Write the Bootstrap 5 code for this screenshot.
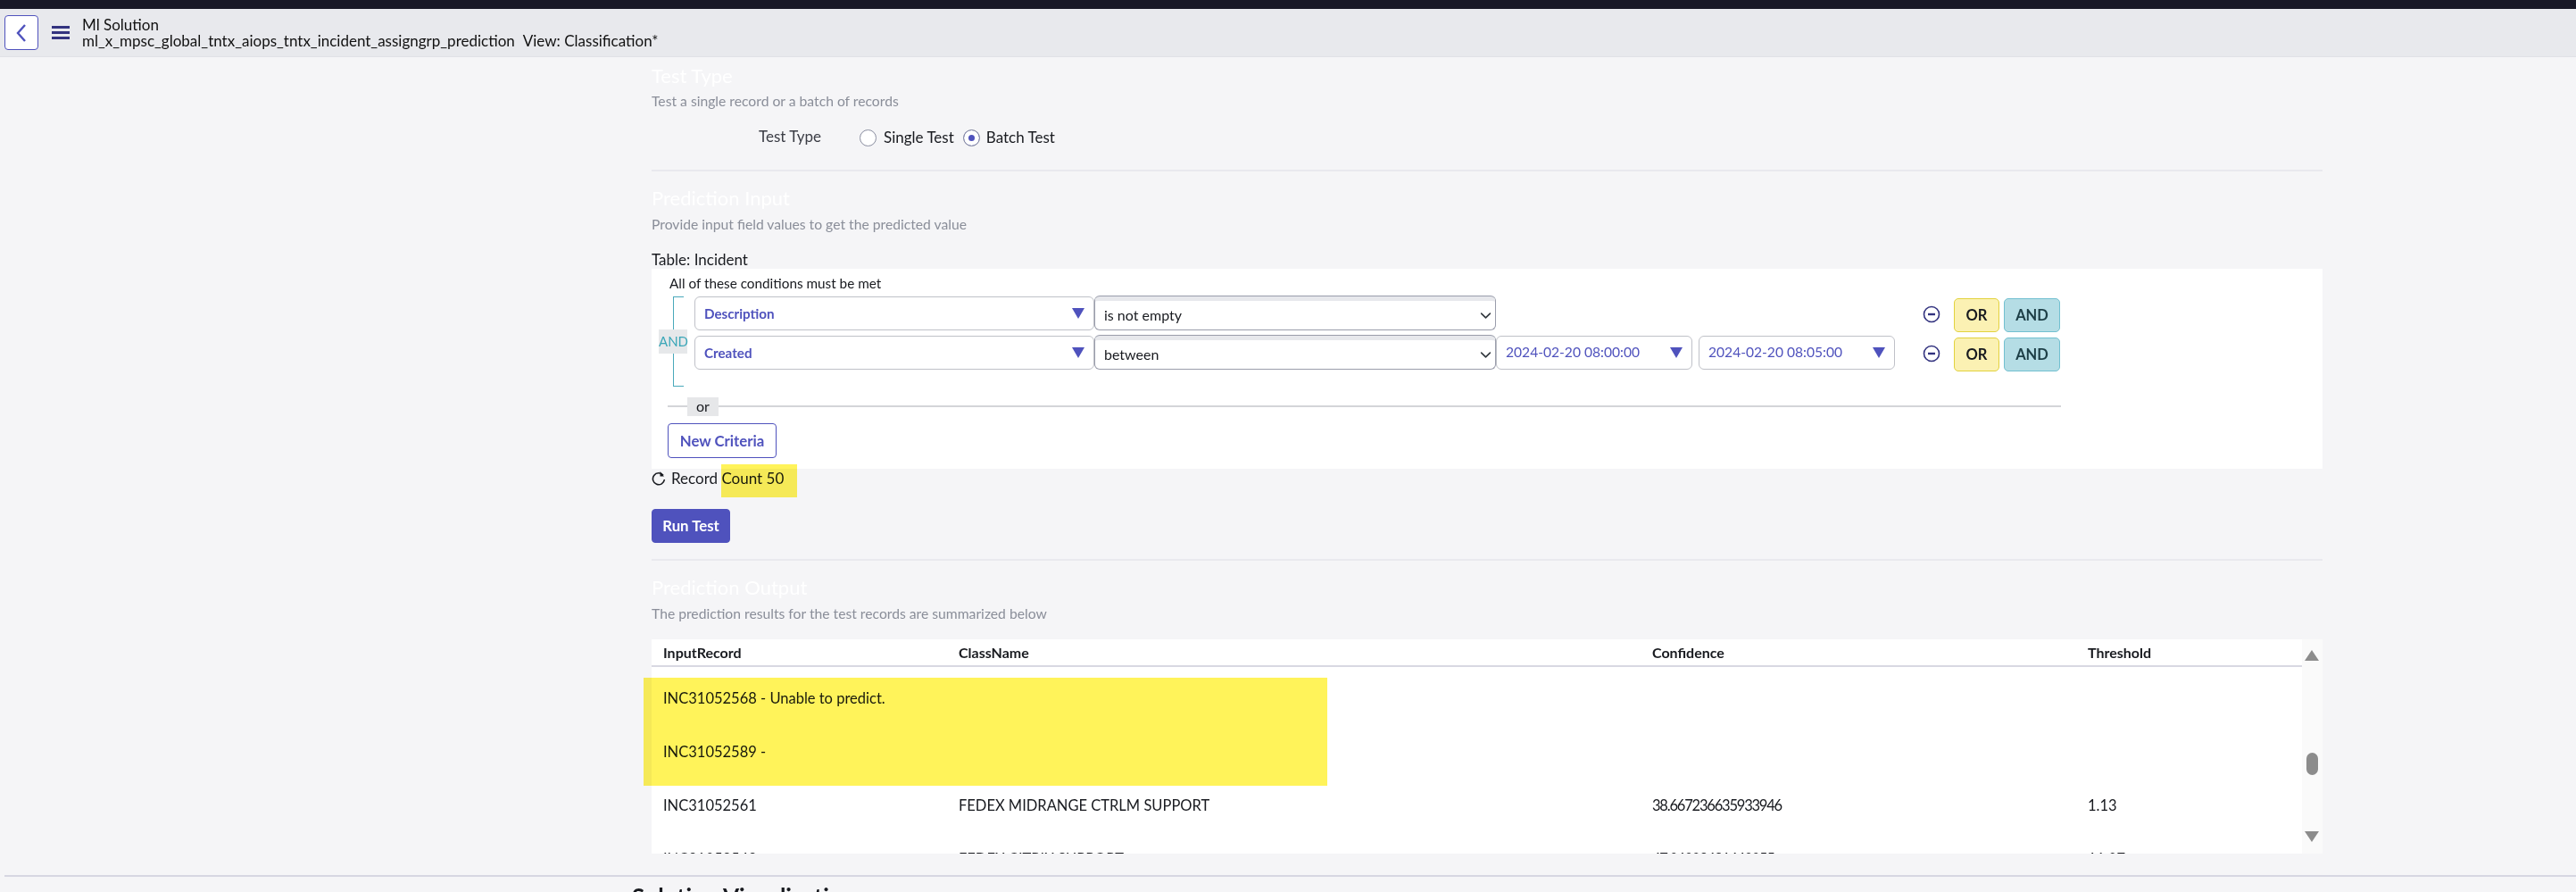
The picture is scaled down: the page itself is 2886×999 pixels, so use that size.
<!DOCTYPE html>
<html>
<head>
  <title>ML Solution</title>
  <link href="https://cdn.jsdelivr.net/npm/bootstrap@5.3.2/dist/css/bootstrap.min.css" rel="stylesheet">
  <script src="https://cdn.jsdelivr.net/npm/bootstrap@5.3.2/dist/js/bootstrap.bundle.min.js"></script>
  <style>
    html, body { height: 999px; overflow: hidden; }
    body { background: #f5f5f7; font-family: Lato, "Liberation Sans", sans-serif; font-size: 17px; color: #181a1f; position: relative; }
    .top-strip { height: 10px; background: #181826; }
    .app-head { height: 54px; background: #e8e9ed; border-bottom: 1px solid #e0e1e6; padding-left: 5px; }
    .back-btn { width: 38px; height: 39px; border: 1px solid #4f52bd; border-radius: 4px; background: #fff; }
    .menu-icon { margin-left: 15px; margin-right: 14px; }
    .head-text { line-height: 18px; font-size: 17px; color: #111; }
    .view-name { margin-left: 9px; }
    .page-col { width: 1872px; margin-left: 730px; }
    .sec-title { color: #fff; font-size: 22px; line-height: 26px; margin: 0; font-weight: 400; }
    .sec-sub { color: #8a8e99; line-height: 20px; font-size: 15.7px; margin: 0; }
    .sec-line { height: 2px; background: #e9e9ee; }
    .type-row { margin-top: 19px; height: 24px; padding-left: 120px; }
    .type-label { width: 113px; padding-bottom: 3px; color: #3b3d45; }
    .fake-radio { width: 19px; height: 19px; border: 1px solid #8a8ea0; border-radius: 50%; background: #fff; margin-right: 8px; }
    .fake-radio.is-on { background: #4f52bd; box-shadow: inset 0 0 0 5px #fff; margin-right: 7px; }
    .radio-text { margin-right: 10px; }
    .cond-panel { background: #fff; height: 224px; padding: 6px 0 0 20px; position: relative; }
    .bracket { position: absolute; left: 24px; top: 31px; width: 12px; height: 101px; border: 1px solid #4aa9bb; border-right: 0; }
    .and-tag { position: absolute; left: 8px; top: 68px; width: 32px; height: 27px; background: #e6e8ea; color: #3ba7b8; text-align: center; line-height: 27px; font-size: 15px; }
    .cond-title { line-height: 20px; font-size: 15.3px; }
    .cond-rows { margin-left: 28px; margin-top: 5px; }
    .cond-row { height: 44px; }
    .pick { height: 38px; border: 1px solid #bfc1c8; border-radius: 6px; background: #fff; color: #4f52bd; font-weight: 700; padding: 0 10px; font-size: 15.2px; }
    .pick-field { width: 448px; }
    .pick-date { width: 220px; font-weight: 400; font-size: 15.6px; }
    .pick-date + .pick-date { margin-left: 7px; }
    .tri { width: 0; height: 0; border-left: 7px solid transparent; border-right: 7px solid transparent; border-top: 12px solid #4f52bd; }
    .op-select.form-select { width: 450px; height: 38px; border: 1px solid #9a9dab; border-top: 5px solid #e7e8ec; box-shadow: 0 -1px 0 #9a9dab; border-radius: 6px; padding: 0 10px 1px; font-family: Lato, sans-serif; font-size: 16px; color: #181a1f; background-position: right 3px center; background-size: 15px 13px; }
    .row-actions { position: absolute; left: 1424px; padding-top: 2px; }
    .logic-btn { height: 38px; border-radius: 5px; font-size: 16.5px; font-weight: 700; text-align: center; line-height: 36px; }
    .logic-or { width: 51px; background: #fbf1b3; border: 1px solid #e2d23e; margin-left: 15px; }
    .logic-and { width: 63px; background: #b5dde5; border: 1px solid #72c0d0; margin-left: 5px; color: #1d3f47; }
    .or-wrap { position: absolute; left: 18px; right: 293px; top: 144px; height: 21px; }
    .or-line { position: absolute; left: 0; right: 0; top: 9px; height: 2px; background: #d4d5d8; }
    .or-tag { position: absolute; left: 22px; top: 0; width: 35px; height: 21px; line-height: 19px; text-align: center; background: #e6e7e9; font-size: 16px; }
    .new-btn { position: absolute; left: 18px; top: 173px; width: 122px; height: 39px; border: 1px solid #4f52bd; border-radius: 4px; color: #4f52bd; font-weight: 700; font-size: 16.8px; padding: 0; background: #fff; }
    .count-row { height: 22px; }
    .run-btn { width: 88px; height: 38px; padding: 0; background: #4f52bd; border-color: #4f52bd; color: #fff; font-weight: 700; font-size: 16.8px; border-radius: 4px; }
    .out-table { background: #fff; height: 240px; overflow: hidden; position: relative; }
    .out-row { height: 60px; }
    .out-head { height: 31px; border-bottom: 2px solid #d8d8e2; width: 1849px; font-weight: 700; font-size: 16px; }
    .out-head div, .out-row div { padding-left: 13px; }
    .cell-a { width: 331px; }
    .cell-b { width: 777px; }
    .cell-c { width: 488px; }
    .num-text { letter-spacing: -1.2px; }
    .out-rows { width: 1849px; padding-top: 20px; }
    .out-row { line-height: 30px; font-size: 16.5px; }
    .scroll-col { position: absolute; right: 0; top: 0; bottom: 0; width: 23px; background: #fafafa; }
    .arr-up { position: absolute; left: 3px; top: 12px; width: 0; height: 0; border-left: 8px solid transparent; border-right: 8px solid transparent; border-bottom: 12px solid #8c8c8c; }
    .arr-down { position: absolute; left: 3px; bottom: 13px; width: 0; height: 0; border-left: 8px solid transparent; border-right: 8px solid transparent; border-top: 12px solid #8c8c8c; }
    .scroll-thumb { position: absolute; left: 5px; top: 127px; width: 13px; height: 25px; background: #8c8c8c; border-radius: 7px; }
    .marker { position: absolute; background: #fff35a; mix-blend-mode: multiply; }
    .marker-count { left: 808px; top: 520px; width: 85px; height: 37px; }
    .marker-rows { left: 721px; top: 759px; width: 766px; height: 121px; }
    .foot-line { position: absolute; left: 5px; right: 0; top: 980px; height: 2px; background: #d6d6e2; }
    .foot-title { position: absolute; left: 708px; top: 989px; font-size: 26px; font-weight: 700; line-height: 30px; margin: 0; }
  </style>
</head>
<body>
  <div class="top-strip"></div>
  <header class="app-head d-flex align-items-center">
    <button class="back-btn d-flex align-items-center justify-content-center p-0" type="button" aria-label="Back">
      <svg width="14" height="22" viewBox="0 0 14 22"><path d="M11 2 3 11l8 9" fill="none" stroke="#4f52bd" stroke-width="2.4"/></svg>
    </button>
    <svg class="menu-icon" width="20" height="15" viewBox="0 0 20 15"><path d="M0 1.5h20M0 7.5h20M0 13.5h20" stroke="#33337f" stroke-width="3"/></svg>
    <div class="head-text">
      <div>Ml Solution</div>
      <div>ml_x_mpsc_global_tntx_aiops_tntx_incident_assigngrp_prediction<span class="view-name">View: Classification*</span></div>
    </div>
  </header>

  <main class="page-col">
    <h2 class="sec-title" style="margin-top:8px">Test Type</h2>
    <p class="sec-sub" style="margin-top:5px">Test a single record or a batch of records</p>
    <div class="type-row d-flex align-items-center">
      <div class="type-label">Test Type</div>
      <span class="fake-radio"></span><span class="radio-text">Single Test</span>
      <span class="fake-radio is-on"></span><span>Batch Test</span>
    </div>
    <div class="sec-line" style="margin-top:24px"></div>

    <h2 class="sec-title" style="margin-top:17px">Prediction Input</h2>
    <p class="sec-sub" style="margin-top:6px">Provide input field values to get the predicted value</p>
    <div style="margin-top:20px;line-height:20px">Table: Incident</div>
    <section class="cond-panel">
      <div class="bracket"></div>
      <div class="and-tag">AND</div>
      <div class="cond-title">All of these conditions must be met</div>
      <div class="cond-rows">
        <div class="cond-row d-flex align-items-start">
          <div class="pick pick-field d-flex align-items-center justify-content-between"><span>Description</span><span class="tri"></span></div>
          <select class="op-select form-select"><option>is not empty</option></select>
          <div class="row-actions d-flex align-items-start">
            <svg class="mt-2" width="20" height="20" viewBox="0 0 20 20"><circle cx="10" cy="10" r="8.5" fill="none" stroke="#33337f" stroke-width="1.6"/><path d="M6 10h8" stroke="#33337f" stroke-width="2.4"/></svg>
            <div class="logic-btn logic-or">OR</div><div class="logic-btn logic-and">AND</div>
          </div>
        </div>
        <div class="cond-row d-flex align-items-start">
          <div class="pick pick-field d-flex align-items-center justify-content-between"><span>Created</span><span class="tri"></span></div>
          <select class="op-select form-select"><option>between</option></select>
          <div class="pick pick-date d-flex align-items-center justify-content-between"><span>2024-02-20 08:00:00</span><span class="tri"></span></div>
          <div class="pick pick-date d-flex align-items-center justify-content-between"><span>2024-02-20 08:05:00</span><span class="tri"></span></div>
          <div class="row-actions d-flex align-items-start">
            <svg class="mt-2" width="20" height="20" viewBox="0 0 20 20"><circle cx="10" cy="10" r="8.5" fill="none" stroke="#33337f" stroke-width="1.6"/><path d="M6 10h8" stroke="#33337f" stroke-width="2.4"/></svg>
            <div class="logic-btn logic-or">OR</div><div class="logic-btn logic-and">AND</div>
          </div>
        </div>
      </div>
      <div class="or-wrap"><div class="or-line"></div><div class="or-tag">or</div></div>
      <button class="new-btn" type="button">New Criteria</button>
    </section>
    <div class="count-row d-flex align-items-center" style="gap:6px">
      <svg width="16" height="18" viewBox="0 0 16 18"><path d="M13 5.2A6.5 6.5 0 1 0 14.4 10" fill="none" stroke="#181a1f" stroke-width="1.6"/><path d="M9.5 1v5.5H14z" fill="#181a1f"/></svg>
      <span>Record Count 50</span>
    </div>
    <button class="run-btn btn" type="button" style="margin-top:23px">Run Test</button>
    <div class="sec-line" style="margin-top:18px"></div>

    <h2 class="sec-title" style="margin-top:17px">Prediction Output</h2>
    <p class="sec-sub" style="margin-top:6px">The prediction results for the test records are summarized below</p>
    <section class="out-table" style="margin-top:19px">
      <div class="out-head d-flex align-items-center">
        <div class="cell-a">InputRecord</div><div class="cell-b">ClassName</div><div class="cell-c">Confidence</div><div>Threshold</div>
      </div>
      <div class="out-rows">
        <div class="out-row d-flex"><div class="cell-a text-nowrap">INC31052568 - Unable to predict.</div></div>
        <div class="out-row d-flex"><div class="cell-a">INC31052589 -</div></div>
        <div class="out-row d-flex"><div class="cell-a">INC31052561</div><div class="cell-b">FEDEX MIDRANGE CTRLM SUPPORT</div><div class="cell-c num-text">38.667236635933946</div><div>1.13</div></div>
        <div class="out-row d-flex"><div class="cell-a">INC31052543</div><div class="cell-b">FEDEX CITRIX SUPPORT</div><div class="cell-c num-text">47.06003491640055</div><div>11.07</div></div>
      </div>
      <div class="scroll-col"><span class="arr-up"></span><span class="scroll-thumb"></span><span class="arr-down"></span></div>
    </section>
  </main>

  <div class="marker marker-count"></div>
  <div class="marker marker-rows"></div>
  <div class="foot-line"></div>
  <h2 class="foot-title">Solution Visualization</h2>
</body>
</html>
